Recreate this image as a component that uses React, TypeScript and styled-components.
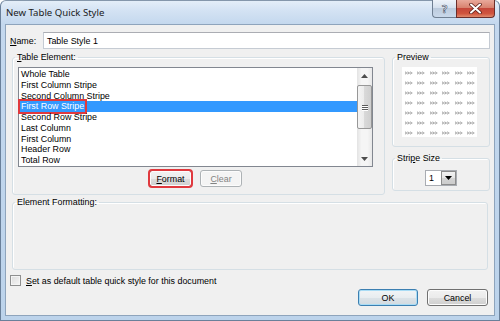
import React from "react";
import styled, { createGlobalStyle } from "styled-components";

const UI = `"Liberation Sans", Arial, sans-serif`;
const TITLE = `"Noto Sans", "Open Sans", sans-serif`;

const GlobalStyle = createGlobalStyle`
  html, body { margin: 0; padding: 0; background: #ffffff; }
  #root { width: 500px; height: 321px; overflow: hidden; }
`;

/// Frame

const Window = styled.div`
  box-sizing: border-box;
  width: 500px;
  height: 321px;
  display: flex;
  flex-direction: column;
  padding: 0 4px 4px 4px;
  border: 1px solid #6a809a;
  border-top-color: #8597ab;
  border-radius: 6px 6px 0 0;
  background: linear-gradient(180deg, #e4eef8 0px, #d3e2f3 10px, #c4d8ee 23px, #bcd3eb 100%);
  font-family: ${UI};
  font-size: 8.9px;
  color: #000;
`;

const TitleBar = styled.div`
  height: 23px;
  display: flex;
  align-items: flex-start;
`;

const Title = styled.div`
  margin: 6px 0 0 1px;
  font-family: ${TITLE};
  font-size: 9.6px;
  color: #1b1b1b;
  line-height: 12px;
`;

const CaptionButtons = styled.div`
  margin: -1px 0 0 auto;
  display: flex;
`;

const HelpButton = styled.div`
  box-sizing: border-box;
  width: 24px;
  height: 18px;
  border: 1px solid #6f7f92;
  border-right: none;
  border-top: none;
  border-radius: 0 0 0 4px;
  background: linear-gradient(180deg, #eef3f9 0%, #d6e1ee 45%, #bccbdd 50%, #c9d8ea 100%);
  display: flex;
  align-items: center;
  justify-content: center;
  font-family: ${TITLE};
  font-weight: 700;
  font-size: 11px;
  color: #ffffff;
  -webkit-text-stroke: 0.6px #3d4d63;
`;

const CloseButton = styled.div`
  box-sizing: border-box;
  width: 39px;
  height: 18px;
  border: 1px solid #6b2e2a;
  border-top: none;
  border-radius: 0 0 4px 0;
  background: linear-gradient(180deg, #e9a99b 0%, #d8826f 45%, #c5473a 50%, #d0553e 80%, #e08a6c 100%);
  display: flex;
  align-items: center;
  justify-content: center;
`;

const Client = styled.div`
  flex: 1;
  display: flex;
  flex-direction: column;
  background: #f0f0f0;
  border: 1px solid #8ea4bc;
  padding: 0 6px;
`;

/// Rows

const NameRow = styled.div`
  margin-top: 7px;
  display: flex;
  align-items: center;
  height: 17px;
`;

const NameLabel = styled.label`
  width: 33px;
  margin-left: -2px;
`;

const TextBox = styled.div`
  flex: 1;
  box-sizing: border-box;
  height: 17px;
  margin-right: -2px;
  border: 1px solid #c5cbd3;
  border-top-color: #abadb3;
  background: #ffffff;
  padding-left: 3px;
  display: flex;
  align-items: center;
`;

const MainRow = styled.div`
  margin-top: 2px;
  display: flex;
  align-items: flex-start;
  gap: 7px;
`;

const RightColumn = styled.div`
  flex: 1;
  display: flex;
  flex-direction: column;
  margin-right: -2px;
`;

const Group = styled.fieldset<{ $width?: number; $top?: number }>`
  margin: ${p => p.$top ?? 0}px 0 0 0;
  padding: 0;
  min-width: 0;
  box-sizing: border-box;
  width: ${p => (p.$width ? `${p.$width}px` : "auto")};
  border: 1px solid #d5dfe5;
  border-radius: 3px;
  box-shadow: inset 1px 1px 0 #ffffff;
`;

const Legend = styled.legend`
  margin-left: 2px;
  padding: 0 2px;
  line-height: 12px;
  font-size: 8.9px;
`;

const GroupBody = styled.div<{ $pad: string; $center?: boolean }>`
  padding: ${p => p.$pad};
  display: flex;
  flex-direction: column;
  align-items: ${p => (p.$center ? "center" : "stretch")};
`;

/// List

const ListBox = styled.div`
  box-sizing: border-box;
  height: 100px;
  border: 1px solid #828790;
  background: #ffffff;
  display: flex;
`;

const Items = styled.div`
  flex: 1;
  padding-top: 1px;
`;

const Item = styled.div<{ $selected?: boolean }>`
  height: 10.75px;
  line-height: 10.75px;
  padding-left: 2px;
  white-space: nowrap;
  background: ${p => (p.$selected ? "#3399ff" : "transparent")};
  color: ${p => (p.$selected ? "#ffffff" : "#000000")};
`;

const Marked = styled.span`
  display: inline-block;
  margin-left: -1px;
  padding: 0 1px;
  height: 11px;
  outline: 2px solid #e0393e;
`;

const ScrollBar = styled.div`
  width: 15px;
  display: flex;
  flex-direction: column;
  background: linear-gradient(90deg, #e3e3e3 0%, #f5f5f5 30%, #f5f5f5 70%, #e8e8e8 100%);
`;

const ArrowCell = styled.div<{ $grow?: boolean }>`
  height: 15px;
  display: flex;
  align-items: center;
  justify-content: center;
  ${p => (p.$grow ? "margin-top: auto;" : "")}
`;

const Thumb = styled.div`
  box-sizing: border-box;
  margin: 2px 0 0 0;
  width: 15px;
  height: 44px;
  border: 1px solid #979797;
  border-radius: 2px;
  background: linear-gradient(90deg, #f4f4f4 0%, #ececec 45%, #d9d9d9 50%, #cfcfcf 100%);
  display: flex;
  flex-direction: column;
  align-items: center;
  justify-content: center;
  gap: 1px;
`;

const Grip = styled.div`
  width: 6px;
  height: 1px;
  background: #5b5b5b;
  box-shadow: 0 1px 0 #ffffff;
`;

/// Buttons

const ButtonRow = styled.div<{ $end?: boolean; $top: number; $gap: number }>`
  margin-top: ${p => p.$top}px;
  display: flex;
  justify-content: ${p => (p.$end ? "flex-end" : "center")};
  gap: ${p => p.$gap}px;
`;

const Button = styled.div<{ $width: number; $disabled?: boolean; $default?: boolean; $marked?: boolean }>`
  box-sizing: border-box;
  width: ${p => p.$width}px;
  height: 17px;
  border: 1px solid ${p => (p.$disabled ? "#adb2b5" : p.$default ? "#3c7fb1" : "#707070")};
  border-radius: 3px;
  background: ${p =>
    p.$disabled
      ? "#f4f4f4"
      : p.$default
      ? "linear-gradient(180deg, #f1f4f6 0%, #e8edf0 50%, #dce3e8 51%, #d2dae0 100%)"
      : "linear-gradient(180deg, #f2f2f2 0%, #ebebeb 50%, #dddddd 51%, #cfcfcf 100%)"};
  box-shadow: inset 0 0 0 1px ${p => (p.$default ? "#a9dcf5" : "#fcfcfc")};
  color: ${p => (p.$disabled ? "#838383" : "#000000")};
  display: flex;
  align-items: center;
  justify-content: center;
  ${p => (p.$marked ? "outline: 2px solid #e0393e; outline-offset: -1px;" : "")}
`;

/// Preview / stripe

const PreviewBox = styled.div`
  width: 75px;
  height: 70px;
  margin-left: 9px;
  background: #ffffff;
  box-sizing: border-box;
  padding: 4px 0 0 3px;
  display: grid;
  grid-template-columns: repeat(6, 12.4px);
  grid-auto-rows: 10px;
`;

const Combo = styled.div`
  display: flex;
  height: 16px;
  box-sizing: border-box;
  border: 1px solid #a9acb2;
  background: #ffffff;
`;

const ComboText = styled.div`
  width: 15px;
  display: flex;
  align-items: center;
  padding-left: 3px;
  box-sizing: border-box;
`;

const ComboButton = styled.div`
  width: 15px;
  box-sizing: border-box;
  border: 1px solid #8c8c8c;
  background: linear-gradient(180deg, #f2f2f2 0%, #e6e6e6 50%, #d4d4d4 51%, #cccccc 100%);
  display: flex;
  align-items: center;
  justify-content: center;
`;

/// Bottom

const CheckRow = styled.label`
  margin-top: 5px;
  margin-left: -2px;
  display: flex;
  align-items: center;
  gap: 5px;
  height: 11px;
`;

const CheckBox = styled.span`
  box-sizing: border-box;
  width: 11px;
  height: 11px;
  border: 1px solid #8e8f8f;
  background: linear-gradient(135deg, #dcdcdc 0%, #f6f6f6 100%);
  box-shadow: inset 0 0 0 1px #f4f4f4;
`;

const Glyph: React.FC = () => (
  <svg width="8" height="4" viewBox="0 0 8 4">
    <path
      d="M0 0.6 L1.6 2 L0 3.4 M2.6 0.6 L4.2 2 L2.6 3.4 M5.2 0.6 L6.8 2 L5.2 3.4 M0 2 H7.5"
      stroke="#a0a0a0"
      strokeWidth="0.8"
      fill="none"
    />
  </svg>
);

const Triangle: React.FC<{ up?: boolean; color?: string }> = ({ up, color = "#4d4d4d" }) => (
  <svg width="7" height="4" viewBox="0 0 7 4">
    <path d={up ? "M0 4 L3.5 0 L7 4 Z" : "M0 0 L7 0 L3.5 4 Z"} fill={color} />
  </svg>
);

const elements = [
  "Whole Table",
  "First Column Stripe",
  "Second Column Stripe",
  "First Row Stripe",
  "Second Row Stripe",
  "Last Column",
  "First Column",
  "Header Row",
  "Total Row",
];

export default function App() {
  return (
    <>
      <GlobalStyle />
      <Window>
        <TitleBar>
          <Title>New Table Quick Style</Title>
          <CaptionButtons>
            <HelpButton>?</HelpButton>
            <CloseButton>
              <svg width="13" height="11" viewBox="0 0 13 11">
                <path d="M2 1.5 L11 9.5 M11 1.5 L2 9.5" stroke="#5a1e18" strokeWidth="3.6" strokeLinecap="round" />
                <path d="M2 1.5 L11 9.5 M11 1.5 L2 9.5" stroke="#ffffff" strokeWidth="2" strokeLinecap="round" />
              </svg>
            </CloseButton>
          </CaptionButtons>
        </TitleBar>
        <Client>
          <NameRow>
            <NameLabel>
              <u>N</u>ame:
            </NameLabel>
            <TextBox>Table Style 1</TextBox>
          </NameRow>

          <MainRow>
            <Group $width={373}>
              <Legend>
                <u>T</u>able Element:
              </Legend>
              <GroupBody $pad="4px 11px 7px 5px">
                <ListBox>
                  <Items>
                    {elements.map((e, i) => (
                      <Item key={i} $selected={i === 3}>
                        {i === 3 ? <Marked>{e}</Marked> : e}
                      </Item>
                    ))}
                  </Items>
                  <ScrollBar>
                    <ArrowCell>
                      <Triangle up />
                    </ArrowCell>
                    <Thumb>
                      <Grip />
                      <Grip />
                      <Grip />
                    </Thumb>
                    <ArrowCell $grow>
                      <Triangle />
                    </ArrowCell>
                  </ScrollBar>
                </ListBox>
                <ButtonRow $top={3} $gap={8}>
                  <Button $width={43} $marked>
                    <span>
                      <u>F</u>ormat
                    </span>
                  </Button>
                  <Button $width={42} $disabled>
                    <span>
                      <u>C</u>lear
                    </span>
                  </Button>
                </ButtonRow>
              </GroupBody>
            </Group>

            <RightColumn>
              <Group>
                <Legend>Preview</Legend>
                <GroupBody $pad="4px 0 9px 0">
                  <PreviewBox>
                    {Array.from({ length: 42 }).map((_, i) => (
                      <Glyph key={i} />
                    ))}
                  </PreviewBox>
                </GroupBody>
              </Group>
              <Group $top={5}>
                <Legend>
                  Stri<u>p</u>e Size
                </Legend>
                <GroupBody $pad="6px 0 4px 0" $center>
                  <Combo>
                    <ComboText>1</ComboText>
                    <ComboButton>
                      <Triangle color="#000000" />
                    </ComboButton>
                  </Combo>
                </GroupBody>
              </Group>
            </RightColumn>
          </MainRow>

          <Group $top={1}>
            <Legend>Element Formatting:</Legend>
            <GroupBody $pad="0 0 61px 0" />
          </Group>

          <CheckRow>
            <CheckBox />
            <span>
              <u>S</u>et as default table quick style for this document
            </span>
          </CheckRow>

          <ButtonRow $end $top={3} $gap={9}>
            <Button $width={60} $default>
              OK
            </Button>
            <Button $width={61}>Cancel</Button>
          </ButtonRow>
        </Client>
      </Window>
    </>
  );
}
